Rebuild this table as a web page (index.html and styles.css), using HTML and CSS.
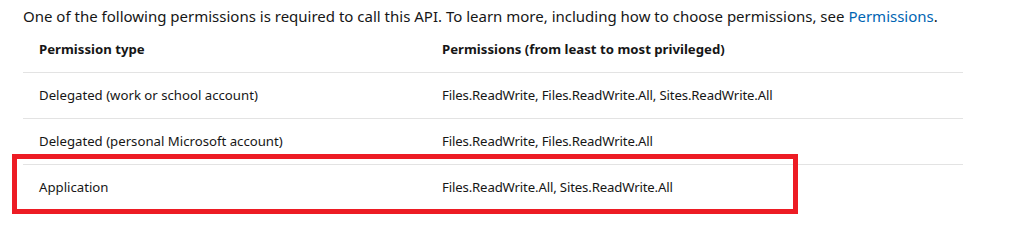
FILE: index.html
```html
<!DOCTYPE html>
<html lang="en">
<head>
  <meta charset="UTF-8" />
  <title>Permissions</title>
  <link rel="stylesheet" href="styles.css">
</head>
<body>
  <div class="content">
    <p class="intro">One of the following permissions is required to call this API. To learn more, including how to choose permissions, see <a href="#">Permissions</a>.</p>

    <table class="perm-table">
      <thead>
        <tr>
          <th class="col-type">Permission type</th>
          <th>Permissions (from least to most privileged)</th>
        </tr>
      </thead>
      <tbody>
        <tr>
          <td>Delegated (work or school account)</td>
          <td class="scopes">Files.ReadWrite, Files.ReadWrite.All, Sites.ReadWrite.All</td>
        </tr>
        <tr>
          <td>Delegated (personal Microsoft account)</td>
          <td class="scopes">Files.ReadWrite, Files.ReadWrite.All</td>
        </tr>
        <tr>
          <td>Application</td>
          <td class="scopes">Files.ReadWrite.All, Sites.ReadWrite.All</td>
        </tr>
      </tbody>
    </table>

    <!-- highlight around the application row -->
    <div class="highlight"></div>
  </div>
</body>
</html>
```

FILE: styles.css
```css
html, body {
  height: 100%;
}
body {
  margin: 0;
  background: #fff;
  color: #161616;
  font-family: "Noto Sans", "Open Sans", sans-serif;
}
a {
  color: #0065b3;
  text-decoration: none;
}
.content {
  position: relative;
  padding-left: 23px;
  min-height: 246px;
}
.intro {
  margin: 0;
  padding-top: 4px;
  font-size: 15px;
  line-height: 24px;
}
.perm-table {
  width: 940px;
  border-collapse: collapse;
  font-size: 13.2px;
  margin-top: 3px;
}
.perm-table th {
  text-align: left;
  font-weight: 700;
  padding: 8px 16px 12px;
  line-height: 21px;
  border-bottom: 1px solid #e3e3e3;
}
.perm-table th.col-type {
  width: 371px;
}
.perm-table td {
  padding: 12px 16px;
  line-height: 21px;
  border-top: 1px solid #e3e3e3;
}
.perm-table td.scopes {
  letter-spacing: -0.15px;
}
.perm-table tbody tr:first-child td {
  border-top: none;
}
.highlight {
  position: absolute;
  left: 12px;
  top: 154px;
  width: 776px;
  height: 50px;
  border: 5px solid #ed1c24;
}
```
